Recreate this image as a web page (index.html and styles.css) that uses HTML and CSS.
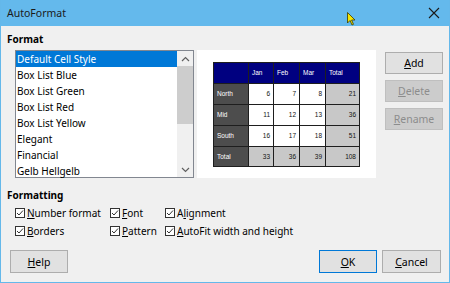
FILE: index.html
```html
<!DOCTYPE html>
<html>
<head>
<meta charset="utf-8">
<link rel="stylesheet" href="styles.css">
</head>
<body>
<div class="window">
  <div class="titlebar">
    <span class="title">AutoFormat</span>
    <svg class="close" width="12" height="12" viewBox="0 0 12 12"><path d="M1 1 L11 11 M11 1 L1 11" stroke="#1a1a1a" stroke-width="1.1" fill="none"/></svg>
  </div>
  <div class="body">
    <div class="heading">Format</div>
    <div class="main">
      <div class="listbox">
        <ul class="items">
          <li class="selected">Default Cell Style</li>
          <li>Box List Blue</li>
          <li>Box List Green</li>
          <li>Box List Red</li>
          <li>Box List Yellow</li>
          <li>Elegant</li>
          <li>Financial</li>
          <li>Gelb Hellgelb</li>
        </ul>
        <div class="scrollbar">
          <div class="arrow"><svg width="9" height="6" viewBox="0 0 9 6"><path d="M1 5 L4.5 1.5 L8 5" stroke="#606060" stroke-width="1.2" fill="none"/></svg></div>
          <div class="track"><div class="thumb"></div></div>
          <div class="arrow"><svg width="9" height="6" viewBox="0 0 9 6"><path d="M1 1 L4.5 4.5 L8 1" stroke="#606060" stroke-width="1.2" fill="none"/></svg></div>
        </div>
      </div>
      <div class="preview">
        <div class="sheet">
          <div class="c hd"></div><div class="c hd">Jan</div><div class="c hd">Feb</div><div class="c hd">Mar</div><div class="c hd">Total</div>
          <div class="c lb">North</div><div class="c num">6</div><div class="c num">7</div><div class="c num">8</div><div class="c num tot">21</div>
          <div class="c lb">Mid</div><div class="c num">11</div><div class="c num">12</div><div class="c num">13</div><div class="c num tot">36</div>
          <div class="c lb">South</div><div class="c num">16</div><div class="c num">17</div><div class="c num">18</div><div class="c num tot">51</div>
          <div class="c lb">Total</div><div class="c num tot">33</div><div class="c num tot">36</div><div class="c num tot">39</div><div class="c num tot">108</div>
        </div>
      </div>
      <div class="side-buttons">
        <button class="btn"><u>A</u>dd</button>
        <button class="btn disabled"><u>D</u>elete</button>
        <button class="btn disabled"><u>R</u>ename</button>
      </div>
    </div>
    <div class="heading heading-fmt">Formatting</div>
    <div class="checks">
      <div class="check"><svg class="box" width="10" height="10" viewBox="0 0 10 10"><rect x="0.5" y="0.5" width="9" height="9" fill="#fff" stroke="#333"/><path d="M2 5 L4 7 L8 2.5" stroke="#333" stroke-width="1" fill="none"/></svg><span><u>N</u>umber format</span></div>
      <div class="check"><svg class="box" width="10" height="10" viewBox="0 0 10 10"><rect x="0.5" y="0.5" width="9" height="9" fill="#fff" stroke="#333"/><path d="M2 5 L4 7 L8 2.5" stroke="#333" stroke-width="1" fill="none"/></svg><span><u>F</u>ont</span></div>
      <div class="check"><svg class="box" width="10" height="10" viewBox="0 0 10 10"><rect x="0.5" y="0.5" width="9" height="9" fill="#fff" stroke="#333"/><path d="M2 5 L4 7 L8 2.5" stroke="#333" stroke-width="1" fill="none"/></svg><span>A<u>l</u>ignment</span></div>
      <div class="check"><svg class="box" width="10" height="10" viewBox="0 0 10 10"><rect x="0.5" y="0.5" width="9" height="9" fill="#fff" stroke="#333"/><path d="M2 5 L4 7 L8 2.5" stroke="#333" stroke-width="1" fill="none"/></svg><span><u>B</u>orders</span></div>
      <div class="check"><svg class="box" width="10" height="10" viewBox="0 0 10 10"><rect x="0.5" y="0.5" width="9" height="9" fill="#fff" stroke="#333"/><path d="M2 5 L4 7 L8 2.5" stroke="#333" stroke-width="1" fill="none"/></svg><span><u>P</u>attern</span></div>
      <div class="check"><svg class="box" width="10" height="10" viewBox="0 0 10 10"><rect x="0.5" y="0.5" width="9" height="9" fill="#fff" stroke="#333"/><path d="M2 5 L4 7 L8 2.5" stroke="#333" stroke-width="1" fill="none"/></svg><span><u>A</u>utoFit width and height</span></div>
    </div>
  </div>
  <div class="footer">
    <button class="btn"><u>H</u>elp</button>
    <div class="spacer"></div>
    <button class="btn default"><u>O</u>K</button>
    <button class="btn cancel"><u>C</u>ancel</button>
  </div>
  <svg class="cursor" width="10" height="14" viewBox="0 0 10 14"><path d="M0.5 0.5 L0.5 11 L3 8.5 L5 13 L6.5 12.3 L4.6 8 L8 8 Z" fill="#f5e600" stroke="#3a3a00" stroke-width="0.8"/></svg>
</div>
</body>
</html>
```

FILE: styles.css
```css
html, body {
  margin: 0;
  padding: 0;
}
body {
  font-family: "Noto Sans", "Open Sans", sans-serif;
  font-size: 10px;
  color: #000;
  background: #f0f0f0;
}
.window {
  position: relative;
  width: 450px;
  height: 283px;
  box-sizing: border-box;
  border: 1px solid #64b8ea;
  border-top: 0;
  background: #f0f0f0;
  display: flex;
  flex-direction: column;
  overflow: hidden;
}
.titlebar {
  height: 26px;
  margin: 0 -1px;
  background: #64b9ec;
  display: flex;
  align-items: center;
  justify-content: space-between;
  padding: 0 10px 0 7px;
  flex-shrink: 0;
}
.title {
  font-size: 10.5px;
  color: #1a1a1a;
}
.close {
  display: block;
}
.body {
  padding: 0 6px;
}
.heading {
  font-weight: bold;
  height: 14px;
  line-height: 14px;
  margin-top: 6px;
}
.main {
  display: flex;
  margin-top: 4px;
  margin-left: 8px;
  height: 128px;
}
.listbox {
  width: 179px;
  height: 128px;
  box-sizing: border-box;
  border: 1px solid #828790;
  background: #fff;
  display: flex;
}
.items {
  list-style: none;
  margin: 0;
  padding: 0;
  flex: 1;
}
.items li {
  height: 16px;
  line-height: 16px;
  padding-left: 1px;
  white-space: nowrap;
}
.items li.selected {
  background: #0078d7;
  color: #fff;
}
.scrollbar {
  width: 16px;
  background: #f0f0f0;
  display: flex;
  flex-direction: column;
}
.arrow {
  height: 15px;
  display: flex;
  align-items: center;
  justify-content: center;
}
.track {
  flex: 1;
}
.thumb {
  height: 58px;
  background: #cdcdcd;
}
.preview {
  width: 179px;
  height: 128px;
  margin-left: 3px;
  background: #fff;
  display: flex;
  align-items: center;
  justify-content: center;
}
.sheet {
  display: grid;
  grid-template-columns: 34px 24px 25px 25px 33px;
  grid-template-rows: 20px 20px 20px 20px 19px;
  gap: 1px;
  padding: 1px;
  background: #1e1e1e;
  font-family: "Liberation Sans", Arial, sans-serif;
  font-size: 6.5px;
}
.c {
  display: flex;
  align-items: center;
  padding: 0 3px;
  background: #fff;
  color: #111;
}
.hd {
  background: #000080;
  color: #fff;
}
.lb {
  background: #4d4d4d;
  color: #fff;
}
.num {
  justify-content: flex-end;
}
.tot {
  background: #c8c8c8;
}
.side-buttons {
  display: flex;
  flex-direction: column;
  gap: 6px;
  margin-left: 9px;
  padding-top: 2px;
}
.btn {
  font-family: "Noto Sans", "Open Sans", sans-serif;
  font-size: 10.5px;
  width: 58px;
  height: 22px;
  padding: 0;
  border: 1px solid #adadad;
  background: #e1e1e1;
  color: #000;
  box-sizing: border-box;
}
.btn.disabled {
  background: #cccccc;
  border-color: #bfbfbf;
  color: #8c8c8c;
}
.heading-fmt {
  margin-top: 10px;
}
.checks {
  display: grid;
  grid-template-columns: 95px 55px auto;
  grid-auto-rows: 18px;
  margin-top: 2px;
  margin-left: 8px;
}
.check {
  display: flex;
  align-items: center;
  gap: 2px;
  white-space: nowrap;
}
.box {
  display: block;
  flex-shrink: 0;
}
.footer {
  margin-top: auto;
  margin-bottom: 9px;
  display: flex;
  padding: 0 8px 0 9px;
}
.footer .btn {
  height: 23px;
}
.spacer {
  flex: 1;
}
.btn.default {
  border-color: #0078d7;
}
.btn.cancel {
  margin-left: 5px;
  width: 59px;
}
.cursor {
  position: absolute;
  left: 346px;
  top: 12px;
}
```
